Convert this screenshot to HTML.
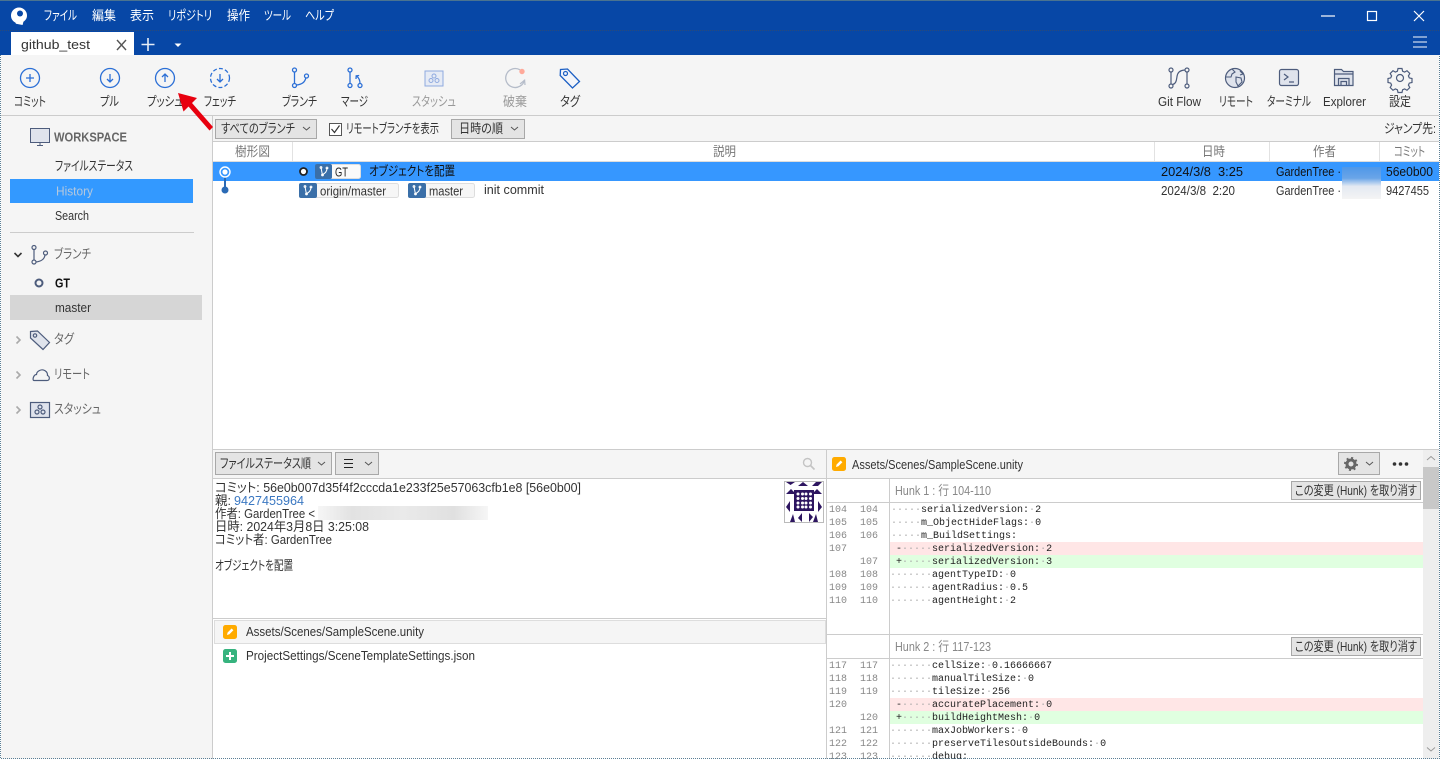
<!DOCTYPE html>
<html><head><meta charset="utf-8"><style>
html,body{margin:0;padding:0;background:#fff;overflow:hidden}
svg{display:block}
text{font-family:"Liberation Sans","Noto Sans CJK JP",sans-serif;font-size:13px;font-feature-settings:"palt";fill:#333;white-space:pre}
.m{fill:#fff}.g{fill:#999}.h{fill:#777}.s{fill:#666}.b{font-weight:700}
.c{font-family:"Liberation Mono","DejaVu Sans Mono",monospace;font-size:10px;fill:#222}
.n{font-family:"Liberation Mono","DejaVu Sans Mono",monospace;font-size:10px;fill:#888}
.d{fill:#aaa}
.ic{fill:none;stroke:#2b6fd6;stroke-width:1.3}
.sl{fill:none;stroke:#4d5c7c;stroke-width:1.2}
.sf{fill:#dfe3ec;stroke:#4d5c7c;stroke-width:1.2}
.cb{fill:#e4e4e4;stroke:#a8a8a8}
</style></head><body>
<svg width="1441" height="759" viewBox="0 0 1441 759" xmlns="http://www.w3.org/2000/svg">
<defs>
<linearGradient id="bl1" x1="0" y1="0" x2="0" y2="1"><stop offset="0" stop-color="#4f97e8"/><stop offset=".35" stop-color="#6aa5e8"/><stop offset=".6" stop-color="#e3e9f2"/><stop offset="1" stop-color="#f4f4f4"/></linearGradient>
<linearGradient id="bl2" x1="0" y1="0" x2="1" y2="0"><stop offset="0" stop-color="#f6f6f6"/><stop offset=".2" stop-color="#e2e2e2"/><stop offset=".5" stop-color="#eaeaea"/><stop offset=".8" stop-color="#e0e0e0"/><stop offset="1" stop-color="#f6f6f6"/></linearGradient>
</defs>
<rect width="1441" height="759" fill="#fff"/>
<!-- title -->
<rect x="0" y="0" width="1441" height="55" fill="#0747a6"/>
<rect x="0" y="0" width="1441" height="1" fill="#4a7390"/>
<line x1="0" y1="30.5" x2="1441" y2="30.5" stroke="#2c4a78" stroke-dasharray="1 1"/>
<path d="M19 7.500a8 8 0 0 1 8 8c0 3-1.700 5-3.600 6.200L22.600 25 16 23.800 15.300 22.500C12.800 21.300 11 18.800 11 15.500a8 8 0 0 1 8-8z" fill="#fff"/>
<circle cx="20" cy="13.500" r="3" fill="#0747a6"/>
<text class="m" x="44" y="20" textLength="33" lengthAdjust="spacingAndGlyphs">ファイル</text>
<text class="m" x="92" y="20" textLength="24" lengthAdjust="spacingAndGlyphs">編集</text>
<text class="m" x="130" y="20" textLength="24" lengthAdjust="spacingAndGlyphs">表示</text>
<text class="m" x="168" y="20" textLength="44" lengthAdjust="spacingAndGlyphs">リポジトリ</text>
<text class="m" x="227" y="20" textLength="23" lengthAdjust="spacingAndGlyphs">操作</text>
<text class="m" x="264" y="20" textLength="27" lengthAdjust="spacingAndGlyphs">ツール</text>
<text class="m" x="305" y="20" textLength="29" lengthAdjust="spacingAndGlyphs">ヘルプ</text>
<path d="M1321 16h14" stroke="#fff" stroke-width="1.200"/>
<rect x="1367.500" y="11.500" width="9" height="9" fill="none" stroke="#fff" stroke-width="1.200"/>
<path d="M1414 11l10 10M1424 11l-10 10" stroke="#fff" stroke-width="1.200"/>
<rect x="11" y="32" width="123" height="23" fill="#fff"/>
<text x="21" y="49" textLength="69" lengthAdjust="spacingAndGlyphs">github_test</text>
<path d="M117 40l9 10M126 40l-9 10" stroke="#555" stroke-width="1.400"/>
<path d="M148 38v13M141.500 44.500h13" stroke="#fff" stroke-width="1.600" opacity=".9"/>
<path d="M174.500 43.500h7l-3.500 3.500z" fill="#fff"/>
<path d="M1413 37h14M1413 42h14M1413 47h14" stroke="#a9bfe0" stroke-width="1.500"/>
<!-- toolbar -->
<rect x="1" y="55" width="1438" height="60" fill="#f5f5f5"/>
<rect x="1" y="115" width="1438" height="1" fill="#ccc"/>
<circle class="ic" cx="30" cy="78" r="9.500"/><path d="M30 74v8M26 78h8" stroke="#2b6fd6" stroke-width="1.300"/>
<circle class="ic" cx="110" cy="78" r="9.500"/><path class="ic" d="M110 74v7.500M107 79l3 3 3-3"/>
<circle class="ic" cx="165" cy="78" r="9.500"/><path class="ic" d="M165 82v-7.500M162 77l3-3 3 3"/>
<circle class="ic" cx="220" cy="78" r="9.500" stroke-dasharray="4 2.200"/><path class="ic" d="M220 74v7.500M217 79l3 3 3-3"/>
<g class="ic" stroke="#1c5fc4"><circle cx="294.500" cy="70" r="2"/><circle cx="294.500" cy="85.500" r="2"/><circle cx="306.500" cy="76" r="2"/><path d="M294.500 72v11.500M305.800 78c-.8 4-4.300 6.500-9.300 7"/></g>
<g class="ic" stroke="#1c5fc4"><circle cx="350" cy="70" r="2"/><circle cx="350" cy="85.500" r="2"/><circle cx="360" cy="85.500" r="2"/><path d="M350 72v11.500M360 83.500c0-3-.8-5.500-3.500-7.500M356 79l.2-3.200 3-.3"/></g>
<rect x="425" y="71" width="18" height="15" fill="#e6ebf5" stroke="#8faae0"/><g fill="none" stroke="#8faae0"><circle cx="434" cy="76" r="2"/><circle cx="431" cy="80.500" r="2"/><circle cx="437" cy="80.500" r="2"/></g>
<path d="M520 69.800A9.500 9.500 0 1 0 524.500 80" fill="none" stroke="#b5bcc9" stroke-width="1.300"/><path d="M520 84l4.600-3.800 .4 4.800" fill="none" stroke="#b5bcc9" stroke-width="1.200"/><circle cx="522" cy="71.500" r="2.700" fill="#ffa99a"/>
<path d="M560.500 69.500l7-.5 12 12.500-7 6.500-12.300-12.500z" fill="#f3f5fa" stroke="#1c5fc4" stroke-width="1.300"/><circle cx="565.500" cy="73.500" r="2" fill="none" stroke="#1c5fc4" stroke-width="1.200"/>
<text x="14" y="106" textLength="32" lengthAdjust="spacingAndGlyphs">コミット</text>
<text x="100" y="106" textLength="19" lengthAdjust="spacingAndGlyphs">プル</text>
<text x="147" y="106" textLength="36" lengthAdjust="spacingAndGlyphs">プッシュ</text>
<text x="204" y="106" textLength="32" lengthAdjust="spacingAndGlyphs">フェッチ</text>
<text x="282" y="106" textLength="35" lengthAdjust="spacingAndGlyphs">ブランチ</text>
<text x="341" y="106" textLength="27" lengthAdjust="spacingAndGlyphs">マージ</text>
<text class="g" x="412" y="106" textLength="44" lengthAdjust="spacingAndGlyphs">スタッシュ</text>
<text class="g" x="503" y="106" textLength="24" lengthAdjust="spacingAndGlyphs">破棄</text>
<text x="560" y="106" textLength="20" lengthAdjust="spacingAndGlyphs">タグ</text>
<text x="1158" y="106" textLength="43" lengthAdjust="spacingAndGlyphs">Git Flow</text>
<text x="1219" y="106" textLength="34" lengthAdjust="spacingAndGlyphs">リモート</text>
<text x="1267" y="106" textLength="44" lengthAdjust="spacingAndGlyphs">ターミナル</text>
<text x="1323" y="106" textLength="43" lengthAdjust="spacingAndGlyphs">Explorer</text>
<text x="1389" y="106" textLength="22" lengthAdjust="spacingAndGlyphs">設定</text>
<!-- right tools -->
<g class="sl"><circle cx="1171" cy="70" r="2"/><circle cx="1171" cy="86" r="2"/><circle cx="1187" cy="70" r="2"/><circle cx="1187" cy="86" r="2"/><path d="M1171 72v12M1187 72v12M1172.500 84.500c4-1 4-5 4.500-8s1.500-6 8-6.500"/></g>
<circle class="sf" cx="1235" cy="78" r="9.500"/><path d="M1232 69l3 3-3 2-1 3-5 0M1236 77l5 1 1 4-4 4-2-4zM1240 71l3 3-3 1" fill="none" stroke="#4d5c7c" stroke-width="1.100"/>
<rect class="sf" x="1279.500" y="69.500" width="19" height="16" rx="2"/><path class="sl" d="M1284 74l4 3-4 3M1289 82h5"/>
<path class="sf" d="M1334.500 69.500h7l2 2h9.500v14h-18.500z"/><path class="sl" d="M1334.500 74h18.500M1338.500 85.500v-7h10.500v7M1341 85.500v-4h5.500v4"/>
<path class="sl" d="M1398 68.500h4l.6 2.700 2 .9 2.400-1.400 2.800 2.800-1.400 2.400.9 2 2.700.6v4l-2.700.6-.9 2 1.400 2.400-2.800 2.800-2.400-1.400-2 .9-.6 2.700h-4l-.6-2.700-2-.9-2.400 1.400-2.800-2.800 1.400-2.400-.9-2-2.700-.6v-4l2.700-.6.900-2-1.400-2.400 2.800-2.800 2.400 1.400 2-.9z"/><circle class="sl" cx="1400" cy="78" r="3.500"/>
<!-- sidebar -->
<rect x="1" y="116" width="211" height="643" fill="#f5f5f5"/>
<rect x="212" y="116" width="1" height="643" fill="#ccc"/>
<rect x="30.500" y="128.500" width="19" height="14" fill="#dfe3ec" stroke="#4d5c7c"/><path d="M37 145.500h6M40 143v2" stroke="#4d5c7c"/>
<text class="s b" x="54" y="141.500" textLength="73" lengthAdjust="spacingAndGlyphs">WORKSPACE</text>
<text x="55" y="170.500" textLength="78" lengthAdjust="spacingAndGlyphs">ファイルステータス</text>
<rect x="10" y="179" width="183" height="24" fill="#3399ff"/>
<text x="56" y="195.500" style="fill:#b5c8dd" textLength="37" lengthAdjust="spacingAndGlyphs">History</text>
<text x="55" y="220" textLength="34" lengthAdjust="spacingAndGlyphs">Search</text>
<rect x="10" y="232" width="184" height="1" fill="#ccc"/>
<path d="M14.500 253l3.500 3.500 3.500-3.500" fill="none" stroke="#333" stroke-width="1.600"/>
<g class="sl"><circle cx="34" cy="247.500" r="2"/><circle cx="34" cy="262" r="2"/><circle cx="45.500" cy="253" r="2"/><path d="M34 249.500v10.500M45 255c-.5 4-4 6.500-9 7"/></g>
<text class="s" x="54" y="258.500" textLength="37" lengthAdjust="spacingAndGlyphs">ブランチ</text>
<circle cx="39" cy="283" r="3.500" fill="none" stroke="#4d5c7c" stroke-width="2"/>
<text class="b" x="55" y="287.500" style="fill:#111" textLength="15" lengthAdjust="spacingAndGlyphs">GT</text>
<rect x="10" y="295" width="192" height="25" fill="#d6d6d6"/>
<text x="55" y="312" textLength="36" lengthAdjust="spacingAndGlyphs">master</text>
<path d="M16.500 336.500l3.500 3.500-3.500 3.500M16.500 371.500l3.500 3.500-3.500 3.500M16.500 406.500l3.500 3.500-3.500 3.500" fill="none" stroke="#aaa" stroke-width="1.600"/>
<path class="sf" d="M30.500 331.500l7-.5 12 11.500-6.500 7-12.500-11.500z"/><circle class="sl" cx="35" cy="335.500" r="1.700"/>
<text class="s" x="54" y="343.500" textLength="20" lengthAdjust="spacingAndGlyphs">タグ</text>
<path class="sl" d="M34 380.500h13c3 0 3-4 .5-5 .3-4-4-7-8-5-2 1-3 2.500-3 4-3 0-4.500 6-2.500 6z"/>
<text class="s" x="54" y="378.500" textLength="36" lengthAdjust="spacingAndGlyphs">リモート</text>
<rect class="sf" x="30.500" y="402.500" width="19" height="15"/><g class="sl"><circle cx="40" cy="407" r="2"/><circle cx="37" cy="412" r="2"/><circle cx="43" cy="412" r="2"/></g>
<text class="s" x="54" y="413.500" textLength="47" lengthAdjust="spacingAndGlyphs">スタッシュ</text>
<!-- list toolbar -->
<rect x="213" y="116" width="1226" height="25" fill="#f5f5f5"/>
<rect class="cb" x="215.500" y="119.500" width="101" height="19"/>
<text x="221" y="133" textLength="74" lengthAdjust="spacingAndGlyphs">すべてのブランチ</text>
<path d="M303 127l3.500 3 3.500-3" fill="none" stroke="#555"/>
<rect x="329.500" y="123.500" width="12" height="12" fill="#fff" stroke="#555"/>
<path d="M331.500 129l3 3.500 5-7" fill="none" stroke="#333" stroke-width="1.200"/>
<text x="346" y="133" textLength="93" lengthAdjust="spacingAndGlyphs">リモートブランチを表示</text>
<rect class="cb" x="451.500" y="119.500" width="73" height="19"/>
<text x="459" y="133" textLength="44" lengthAdjust="spacingAndGlyphs">日時の順</text>
<path d="M511 127l3.500 3 3.500-3" fill="none" stroke="#555"/>
<text x="1384" y="133" textLength="52" lengthAdjust="spacingAndGlyphs">ジャンプ先:</text>
<!-- header -->
<rect x="213" y="141" width="1226" height="1" fill="#ccc"/>
<rect x="213" y="161" width="1226" height="1" fill="#ddd"/>
<rect x="292" y="142" width="1" height="19" fill="#e2e2e2"/><rect x="1154" y="142" width="1" height="19" fill="#e2e2e2"/><rect x="1269" y="142" width="1" height="19" fill="#e2e2e2"/><rect x="1379" y="142" width="1" height="19" fill="#e2e2e2"/>
<text class="h" x="235" y="156" textLength="35" lengthAdjust="spacingAndGlyphs">樹形図</text>
<text class="h" x="713" y="156" textLength="23" lengthAdjust="spacingAndGlyphs">説明</text>
<text class="h" x="1202" y="156" textLength="23" lengthAdjust="spacingAndGlyphs">日時</text>
<text class="h" x="1313" y="156" textLength="23" lengthAdjust="spacingAndGlyphs">作者</text>
<text class="h" x="1394" y="156" textLength="31" lengthAdjust="spacingAndGlyphs">コミット</text>
<!-- rows -->
<rect x="213" y="162" width="1226" height="19" fill="#3697ff"/>
<path d="M225 172v18" stroke="#2a6ab5" stroke-width="2"/>
<circle cx="225" cy="172" r="5" fill="#3697ff" stroke="#fff" stroke-width="1.400"/><circle cx="225" cy="172" r="2.600" fill="#fff"/>
<circle cx="225" cy="190" r="3.500" fill="#2a6ab5"/>
<circle cx="303.500" cy="171.500" r="3.500" fill="#fff" stroke="#222" stroke-width="1.800"/>
<rect x="315.500" y="164.500" width="45" height="14" rx="2" fill="#fafafa" stroke="#ddd"/><rect x="315" y="164" width="17" height="15" rx="2" fill="#3a6fa8"/>
<g fill="none" stroke="#fff"><path d="M321 167.500l1.500 8M327 168c0 3.500-2 5.500-4.500 6.500"/><circle cx="321" cy="167.500" r=".9"/><circle cx="327" cy="168" r=".9"/><circle cx="322.500" cy="175" r=".9"/></g>
<text x="335" y="176.500" style="fill:#222" textLength="13" lengthAdjust="spacingAndGlyphs">GT</text>
<text x="369" y="175.500" style="fill:#111" textLength="86" lengthAdjust="spacingAndGlyphs">オブジェクトを配置</text>
<rect x="299.500" y="183.500" width="99" height="14" rx="2" fill="#f6f6f6" stroke="#ddd"/><rect x="299" y="183" width="18" height="15" rx="2" fill="#3a6fa8"/>
<g fill="none" stroke="#fff"><path d="M305 186.500l1.500 8M311 187c0 3.500-2 5.500-4.500 6.500"/><circle cx="305" cy="186.500" r=".9"/><circle cx="311" cy="187" r=".9"/><circle cx="306.500" cy="194" r=".9"/></g>
<text x="320" y="195.500" textLength="66" lengthAdjust="spacingAndGlyphs">origin/master</text>
<rect x="408.500" y="183.500" width="66" height="14" rx="2" fill="#f6f6f6" stroke="#ddd"/><rect x="408" y="183" width="18" height="15" rx="2" fill="#3a6fa8"/>
<g fill="none" stroke="#fff"><path d="M414 186.500l1.500 8M420 187c0 3.500-2 5.500-4.500 6.500"/><circle cx="414" cy="186.500" r=".9"/><circle cx="420" cy="187" r=".9"/><circle cx="415.500" cy="194" r=".9"/></g>
<text x="429" y="195.500" textLength="34" lengthAdjust="spacingAndGlyphs">master</text>
<text x="484" y="194" textLength="60" lengthAdjust="spacingAndGlyphs">init commit</text>
<text x="1161" y="176" style="fill:#111" textLength="82" lengthAdjust="spacingAndGlyphs">2024/3/8  3:25</text>
<text x="1276" y="176" style="fill:#111" textLength="65" lengthAdjust="spacingAndGlyphs">GardenTree ·</text>
<text x="1386" y="176" style="fill:#111" textLength="47" lengthAdjust="spacingAndGlyphs">56e0b00</text>
<text x="1161" y="195" textLength="74" lengthAdjust="spacingAndGlyphs">2024/3/8  2:20</text>
<text x="1276" y="195" textLength="65" lengthAdjust="spacingAndGlyphs">GardenTree ·</text>
<text x="1386" y="195" textLength="43" lengthAdjust="spacingAndGlyphs">9427455</text>
<rect x="1342" y="167" width="39" height="32" fill="url(#bl1)"/>
<!-- lower -->
<rect x="213" y="449" width="1226" height="1" fill="#ccc"/>
<rect x="213" y="450" width="1226" height="28" fill="#f5f5f5"/>
<rect x="213" y="478" width="1210" height="1" fill="#ccc"/>
<rect class="cb" x="215.500" y="452.500" width="116" height="22"/>
<text x="220" y="468" textLength="91" lengthAdjust="spacingAndGlyphs">ファイルステータス順</text>
<path d="M318 462l3.500 3 3.500-3" fill="none" stroke="#555"/>
<rect class="cb" x="335.500" y="452.500" width="43" height="22"/>
<path d="M344 459.500h9M344 463.500h9M344 467.500h9" stroke="#222"/>
<path d="M365 462l3.500 3 3.500-3" fill="none" stroke="#555"/>
<circle cx="807.500" cy="462.500" r="4" fill="none" stroke="#c4c4c4" stroke-width="1.400"/><path d="M810.500 465.500l4 4" stroke="#c4c4c4" stroke-width="1.600"/>
<rect x="826" y="450" width="1" height="309" fill="#ccc"/>
<text x="215" y="492" textLength="366" lengthAdjust="spacingAndGlyphs">コミット: 56e0b007d35f4f2cccda1e233f25e57063cfb1e8 [56e0b00]</text>
<text x="215" y="505" textLength="16" lengthAdjust="spacingAndGlyphs">親:</text>
<text x="234" y="505" style="fill:#3b78c2" textLength="70" lengthAdjust="spacingAndGlyphs">9427455964</text>
<text x="215" y="518" textLength="100" lengthAdjust="spacingAndGlyphs">作者: GardenTree &lt;</text>
<rect x="318" y="506" width="170" height="14" fill="url(#bl2)"/>
<text x="215" y="531" textLength="154" lengthAdjust="spacingAndGlyphs">日時: 2024年3月8日 3:25:08</text>
<text x="215" y="544" textLength="117" lengthAdjust="spacingAndGlyphs">コミット者: GardenTree</text>
<text x="215" y="570" textLength="78" lengthAdjust="spacingAndGlyphs">オブジェクトを配置</text>
<!-- identicon -->
<rect x="784.500" y="481.500" width="39" height="41" fill="#fff" stroke="#bbb"/>
<g fill="#2d1560">
<path d="M786 482h9l-4.500 3zM798 486l5-4 5 4zM812 486l4-4h6l-4 4zM786 494l5-5 5 5zM812 494l5-5 5 5zM786 507l4-6v11zM822 507l-4-6v11zM795 522l-2-8-3 8zM802 522v-9l-4 5zM809 513v9l4-5zM816 514l2 8h-5z"/>
<rect x="794" y="490" width="20" height="21"/>
</g>
<g fill="#fff"><circle cx="798" cy="494" r="1.500"/><circle cx="802.500" cy="494" r="1.500"/><circle cx="806" cy="494" r="1.500"/><circle cx="810.500" cy="494" r="1.500"/><circle cx="798" cy="498.500" r="1.500"/><circle cx="802.500" cy="498.500" r="1.500"/><circle cx="806" cy="498.500" r="1.500"/><circle cx="810.500" cy="498.500" r="1.500"/><circle cx="798" cy="503" r="1.500"/><circle cx="802.500" cy="503" r="1.500"/><circle cx="806" cy="503" r="1.500"/><circle cx="810.500" cy="503" r="1.500"/><circle cx="798" cy="507" r="1.500"/><circle cx="802.500" cy="507" r="1.500"/><circle cx="806" cy="507" r="1.500"/><circle cx="810.500" cy="507" r="1.500"/></g>
<!-- files -->
<rect x="213" y="618" width="613" height="1" fill="#ccc"/>
<rect x="214.500" y="620.500" width="611" height="23" fill="#f5f5f5" stroke="#ddd"/>
<rect x="223" y="625" width="14" height="14" rx="2.500" fill="#ffab00"/>
<path d="M227 635l.6-2.500 4-4 1.800 1.800-4 4z" fill="#fff"/>
<text x="246" y="636" textLength="178" lengthAdjust="spacingAndGlyphs">Assets/Scenes/SampleScene.unity</text>
<rect x="223" y="649" width="14" height="14" rx="2.500" fill="#36b37e"/>
<path d="M230 652v8M226 656h8" stroke="#fff" stroke-width="2"/>
<text x="246" y="660" textLength="229" lengthAdjust="spacingAndGlyphs">ProjectSettings/SceneTemplateSettings.json</text>
<!-- diff -->
<rect x="832" y="457" width="14" height="14" rx="2.500" fill="#ffab00"/>
<path d="M836 467l.6-2.500 4-4 1.800 1.800-4 4z" fill="#fff"/>
<text x="852" y="469" textLength="171" lengthAdjust="spacingAndGlyphs">Assets/Scenes/SampleScene.unity</text>
<rect class="cb" x="1338.500" y="452.500" width="41" height="22"/>
<circle cx="1351" cy="464" r="4" fill="none" stroke="#666" stroke-width="3"/><circle cx="1351" cy="464" r="6" fill="none" stroke="#666" stroke-width="2" stroke-dasharray="2 2.700"/>
<path d="M1366 462l3.500 3 3.500-3" fill="none" stroke="#555"/>
<circle cx="1394.500" cy="464" r="1.800" fill="#333"/><circle cx="1400.500" cy="464" r="1.800" fill="#333"/><circle cx="1406.500" cy="464" r="1.800" fill="#333"/>
<rect x="1423" y="450" width="16" height="309" fill="#eee"/>
<rect x="1423" y="467" width="16" height="42" fill="#c8c8c8"/>
<path d="M1427 460l4-3.500 4 3.500M1427 747.500l4 3.500 4-3.500" fill="none" stroke="#999"/>
<rect x="889" y="479" width="1" height="280" fill="#ccc"/>
<rect x="827" y="502" width="596" height="1" fill="#ccc"/>
<rect x="827" y="634" width="596" height="1" fill="#ccc"/>
<rect x="827" y="658" width="596" height="1" fill="#ccc"/>
<text x="895" y="495" style="fill:#888" textLength="96" lengthAdjust="spacingAndGlyphs">Hunk 1 : 行 104-110</text>
<text x="895" y="651" style="fill:#888" textLength="96" lengthAdjust="spacingAndGlyphs">Hunk 2 : 行 117-123</text>
<rect class="cb" x="1291.500" y="481.500" width="129" height="18"/>
<text x="1295" y="495" textLength="122" lengthAdjust="spacingAndGlyphs">この変更 (Hunk) を取り消す</text>
<rect class="cb" x="1291.500" y="637.500" width="129" height="18"/>
<text x="1295" y="651" textLength="122" lengthAdjust="spacingAndGlyphs">この変更 (Hunk) を取り消す</text>
<rect x="890" y="542" width="533" height="13" fill="#ffe6e6"/>
<rect x="890" y="555" width="533" height="13" fill="#e0ffe0"/>
<rect x="890" y="698" width="533" height="13" fill="#ffe6e6"/>
<rect x="890" y="711" width="533" height="13" fill="#e0ffe0"/>
<text class="n" x="829" y="512">104</text><text class="n" x="860" y="512">104</text>
<text class="n" x="829" y="525">105</text><text class="n" x="860" y="525">105</text>
<text class="n" x="829" y="538">106</text><text class="n" x="860" y="538">106</text>
<text class="n" x="829" y="551">107</text>
<text class="n" x="860" y="564">107</text>
<text class="n" x="829" y="577">108</text><text class="n" x="860" y="577">108</text>
<text class="n" x="829" y="590">109</text><text class="n" x="860" y="590">109</text>
<text class="n" x="829" y="603">110</text><text class="n" x="860" y="603">110</text>
<text class="c" x="891" y="512"><tspan class="d">·····</tspan>serializedVersion:<tspan class="d">·</tspan>2</text>
<text class="c" x="891" y="525"><tspan class="d">·····</tspan>m_ObjectHideFlags:<tspan class="d">·</tspan>0</text>
<text class="c" x="891" y="538"><tspan class="d">·····</tspan>m_BuildSettings:</text>
<text class="c" x="896" y="551">-<tspan class="d">·····</tspan>serializedVersion:<tspan class="d">·</tspan>2</text>
<text class="c" x="896" y="564">+<tspan class="d">·····</tspan>serializedVersion:<tspan class="d">·</tspan>3</text>
<text class="c" x="890" y="577"><tspan class="d">·······</tspan>agentTypeID:<tspan class="d">·</tspan>0</text>
<text class="c" x="890" y="590"><tspan class="d">·······</tspan>agentRadius:<tspan class="d">·</tspan>0.5</text>
<text class="c" x="890" y="603"><tspan class="d">·······</tspan>agentHeight:<tspan class="d">·</tspan>2</text>
<text class="n" x="829" y="668">117</text><text class="n" x="860" y="668">117</text>
<text class="n" x="829" y="681">118</text><text class="n" x="860" y="681">118</text>
<text class="n" x="829" y="694">119</text><text class="n" x="860" y="694">119</text>
<text class="n" x="829" y="707">120</text>
<text class="n" x="860" y="720">120</text>
<text class="n" x="829" y="733">121</text><text class="n" x="860" y="733">121</text>
<text class="n" x="829" y="746">122</text><text class="n" x="860" y="746">122</text>
<text class="n" x="829" y="759">123</text><text class="n" x="860" y="759">123</text>
<text class="c" x="890" y="668"><tspan class="d">·······</tspan>cellSize:<tspan class="d">·</tspan>0.16666667</text>
<text class="c" x="890" y="681"><tspan class="d">·······</tspan>manualTileSize:<tspan class="d">·</tspan>0</text>
<text class="c" x="890" y="694"><tspan class="d">·······</tspan>tileSize:<tspan class="d">·</tspan>256</text>
<text class="c" x="896" y="707">-<tspan class="d">·····</tspan>accuratePlacement:<tspan class="d">·</tspan>0</text>
<text class="c" x="896" y="720">+<tspan class="d">·····</tspan>buildHeightMesh:<tspan class="d">·</tspan>0</text>
<text class="c" x="890" y="733"><tspan class="d">·······</tspan>maxJobWorkers:<tspan class="d">·</tspan>0</text>
<text class="c" x="890" y="746"><tspan class="d">·······</tspan>preserveTilesOutsideBounds:<tspan class="d">·</tspan>0</text>
<text class="c" x="890" y="759"><tspan class="d">·······</tspan>debug:</text>
<!-- red arrow -->
<path d="M178 93l19 5-5 5 21 24-3.500 3.500-21-24-5 5z" fill="#e8000f"/>
<!-- window edge -->
<path d="M.5 55V758.500H1439.500V55" fill="none" stroke="#5b7f95" stroke-dasharray="1 1"/>
<rect x="1440" y="0" width="1" height="759" fill="#fff"/>
</svg>
</body></html>
